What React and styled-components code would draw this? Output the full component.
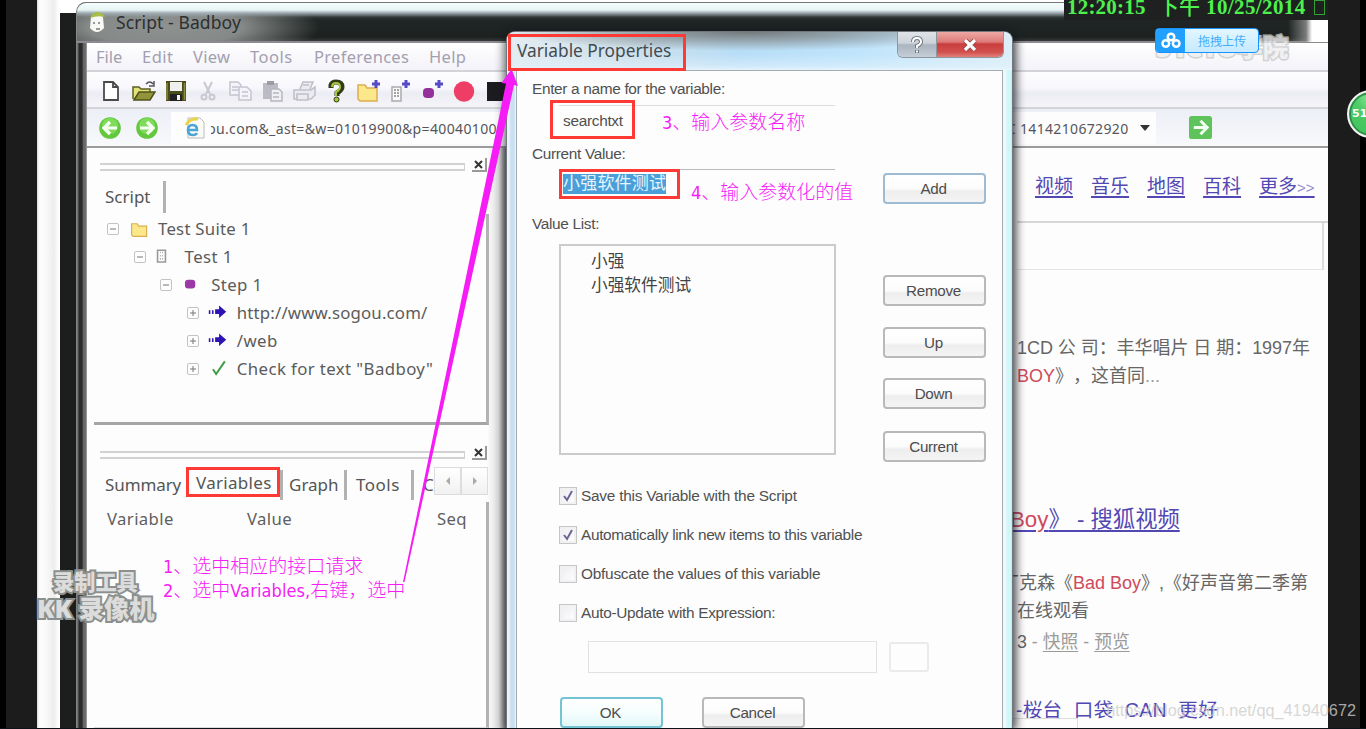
import styled, { createGlobalStyle } from 'styled-components';

const GlobalStyle = createGlobalStyle`
  * {
    box-sizing: border-box;
  }
  body {
    margin: 0;
    overflow: hidden;
    background: #000;
  }
`;

const segoe = '"Noto Sans", "Noto Sans CJK SC", sans-serif';
const arial = '"Liberation Sans", "Noto Sans CJK SC", sans-serif';

const Desktop = styled.div`
  position: relative;
  display: flex;
  width: 1366px;
  height: 729px;
  overflow: hidden;
  background: #000;
  border-bottom: 1px solid #0c1218;
  font-family: ${segoe};
  white-space: nowrap;
`;

const Bezel = styled.div`
  width: ${({ $width }) => $width}px;
  margin-left: ${({ $gap = 0 }) => $gap}px;
  background: #1c1c1c;
`;

const Wallpaper = styled.div`
  width: 1291px;
  padding: 13px 0 0 23px;
  background: linear-gradient(90deg, #d8d8d8 0, #fdfdfd 2px, #fafafa 8px, #ededee 17px, #fff 22px);
`;

const WallpaperDark = styled.div`
  height: 100%;
  background: #1c1d1d;
`;

/* main window */

const Window = styled.section`
  position: absolute;
  left: 76px;
  top: 2px;
  width: 1252px;
  height: 726px;
  display: flex;
  flex-direction: column;
  padding-left: 11px;
  overflow: hidden;
  border-radius: 10px 0 0 0;
  background: linear-gradient(90deg, #8a8a8a 0, #686868 2px, #2a2a2a 3px, #2c2c2c 6px, #777 8px, #5a5a5a 9px, #a8a8a8 11px);
`;

const TitleBar = styled.header`
  display: flex;
  align-items: center;
  height: 41px;
  margin-left: -11px;
  padding: 0 0 0 10px;
  border-top: 1px solid #777;
  border-left: 1px solid #888;
  border-bottom: 2px solid #8c8c90;
  border-radius: 10px 0 0 0;
  background:
    linear-gradient(180deg, #f4fffd 0, #e7f4f4 7px, rgba(165, 178, 186, 0.9) 10px, rgba(56, 64, 63, 0) 14px),
    radial-gradient(ellipse 155px 36px at 88px 24px, #8d9190 0, #858988 50%, rgba(60, 64, 64, 0) 100%),
    linear-gradient(180deg, #38403f 13px, #202625 17px, #1d2221 34px, #414545 40px);
  font-size: 17.5px;
  line-height: 24px;
  color: #2c3030;
`;

const TitleText = styled.span`
  margin-left: 9px;
  letter-spacing: 0.1px;
`;

const CaptionGlow = styled.div`
  position: absolute;
  top: 18px;
  right: 0;
  width: 40px;
  height: 22px;
  background: linear-gradient(90deg, rgba(255, 255, 255, 0) 0, rgba(160, 160, 160, 0.7) 18px, #fff 24px);
`;

const MenuBar = styled.nav`
  display: flex;
  height: 29px;
  padding: 0 0 0 9px;
  border-bottom: 2px solid #d4d4d8;
  background: linear-gradient(180deg, #fff, #f3f3f9);
  font-size: 16.5px;
  line-height: 28px;
  color: #a29fb0;
`;

const MenuItem = styled.span`
  width: ${({ $width }) => $width}px;
  letter-spacing: ${({ $spacing = 0 }) => $spacing}px;
`;

const ToolBar = styled.div`
  display: flex;
  align-items: center;
  height: 37px;
  padding: 2px 0 0 9px;
  border-bottom: 2px solid #d3d3d9;
  background: linear-gradient(180deg, #fdfdfe 0, #f8f7fc 45%, #ecedf4 60%, #f4f4f8 100%);
`;

const ToolSlot = styled.span`
  display: flex;
  justify-content: center;
  width: 32px;
  height: 24px;
`;

const AddressBar = styled.div`
  display: flex;
  align-items: center;
  height: 39px;
  padding-left: 11px;
  border-bottom: 2px solid #9b9b9b;
  background: linear-gradient(180deg, #eceff6, #f8f9fb);
`;

const NavRound = styled.span`
  display: flex;
  width: 24px;
  height: 24px;
  margin-right: 13px;
`;

const AddressField = styled.div`
  display: flex;
  align-items: center;
  width: 985px;
  height: 32px;
  margin-left: -1px;
  padding-left: 13px;
  background: #fdfdfe;
  font-size: 14px;
  color: #55555a;
`;

const AddressText = styled.span`
  width: ${({ $width }) => $width}px;
  margin: 2px 0 0 ${({ $left = 0 }) => $left}px;
  overflow: hidden;
  line-height: 24px;
  letter-spacing: ${({ $spacing = 0 }) => $spacing}px;
`;

const Clipped = styled.span`
  display: inline-block;
  width: 5px;
  overflow: hidden;
  vertical-align: top;
  direction: rtl;
`;

const Caret = styled.i`
  margin-left: 11px;
  border: 5px solid transparent;
  border-top: 6px solid #333;
  border-bottom: 0;
`;

const GoButton = styled.span`
  display: flex;
  margin-left: 33px;
  width: 23px;
  height: 23px;
`;

const Body = styled.div`
  display: flex;
  flex: 1;
  min-height: 0;
`;

const Docks = styled.aside`
  width: 423px;
  padding: 10px 21px 0 7px;
  background: linear-gradient(90deg, #fdfdfd 400px, #dedede 412px, #777 420px);
`;

const Dock = styled.div`
  height: ${({ $height }) => $height}px;
`;

const DockHandle = styled.div`
  display: flex;
  align-items: center;
  justify-content: space-between;
  height: 14px;
  padding: 0 2px 0 6px;
`;

const Grip = styled.span`
  width: 365px;
  height: 8px;
  margin-top: 3px;
  border: solid #d2d2d2;
  border-width: 2px 1px 2px 0;
`;

const CloseBox = styled.span`
  display: flex;
  align-items: center;
  justify-content: center;
  width: 15px;
  height: 14px;
  border-right: 2px solid #999;
  border-bottom: 2px solid #999;
`;

const TabRow = styled.div`
  display: flex;
  align-items: center;
  height: 42px;
  padding-left: 11px;
  color: #555;
  font-size: 17px;
`;

const Tab = styled.span`
  width: ${({ $width }) => $width}px;
  height: ${({ $height = 30 }) => $height}px;
  margin-top: 7px;
  padding-left: ${({ $pad = 0 }) => $pad}px;
  line-height: ${({ $active, $height = 30 }) => ($active ? 26 : $height - 1)}px;
  border-right: ${({ $divider }) => ($divider ? '3px solid #b2b2b2' : '0')};
  overflow: hidden;
  letter-spacing: ${({ $spacing = 0 }) => $spacing}px;
`;

const ScrollButton = styled.span`
  display: flex;
  align-items: center;
  justify-content: center;
  width: 27px;
  height: 28px;
  border: 1px solid #ddd;
  background: linear-gradient(180deg, #fff, #f1f1f1);
`;

const Panel = styled.div`
  height: ${({ $height }) => $height}px;
  border-right: 3px solid #b2b2b2;
  border-bottom: ${({ $open }) => ($open ? '1px solid #ddd' : '3px solid #a5a5a5')};
`;

const TreeRow = styled.div`
  display: flex;
  align-items: center;
  height: 28px;
  padding-left: ${({ $depth }) => 13 + $depth * 26.6}px;
  color: #5b5b5b;
  font-size: 16.8px;
`;

const Expander = styled.span`
  display: flex;
  align-items: center;
  justify-content: center;
  width: 12px;
  height: 12px;
  margin-top: 2px;
  border: 1px solid #c3c3c3;
  border-radius: 2px;
`;

const TreeIcon = styled.span`
  display: flex;
  justify-content: center;
  width: 28px;
  margin: 1px 0 0 ${({ $left }) => $left}px;
`;

const TreeLabel = styled.span`
  margin-left: ${({ $left }) => $left}px;
  letter-spacing: ${({ $spacing = 0 }) => $spacing}px;
`;

const TableHead = styled.div`
  display: flex;
  padding: 3px 0 0 13px;
  font-size: 16.7px;
  line-height: 28px;
  letter-spacing: 0.4px;
  color: #5f5f5f;
`;

const Column = styled.span`
  width: ${({ $width }) => $width}px;
`;

/* page on the right */

const WebPage = styled.main`
  position: relative;
  flex: 1;
  margin-left: 490px;
  padding: 26px 0 0 17px;
  overflow: hidden;
  background: #fdfdfd;
  font-family: ${arial};
`;

const Categories = styled.div`
  display: flex;
  gap: 18px;
  padding-left: 18px;
  font-size: 19px;
  line-height: 26px;
`;

const PageLink = styled.a`
  color: #5148b4;
  text-decoration: underline;
  text-underline-offset: 3px;
  text-decoration-thickness: 2px;
`;

const Chevrons = styled.span`
  font-size: 15px;
  color: #918cc8;
`;

const SearchBox = styled.div`
  height: 49px;
  margin: 20px 0 0 0;
  border-top: 2px solid #d6d6d6;
  padding-right: 4px;
`;

const SearchInner = styled.div`
  height: 47px;
  border-right: 2px solid #ddd;
  border-bottom: 1px solid #e4e4e4;
`;

const Line = styled.p`
  height: 28px;
  margin: ${({ $top = 0 }) => $top}px 0 0 ${({ $left = 0 }) => $left}px;
  font-size: ${({ $size = 18 }) => $size}px;
  line-height: 28px;
  letter-spacing: ${({ $spacing = 0 }) => $spacing}px;
  text-spacing-trim: space-all;
  color: #666;
`;

const Mark = styled.em`
  font-style: normal;
  color: #cf4a5c;
`;

const Soft = styled.span`
  color: #9b9b9b;
  text-decoration: ${({ $link }) => ($link ? 'underline' : 'none')};
  text-underline-offset: 3px;
`;

const LastLine = styled.div`
  margin: 42px 0 0 -1px;
  font-size: 19.5px;
  line-height: 24px;
  letter-spacing: 0.3px;
  color: #5148b4;
`;

const StatusTip = styled.div`
  position: absolute;
  left: 0;
  bottom: 0;
  width: 78px;
  height: 10px;
  border: solid #ddd;
  border-width: 1px 1px 0 0;
  background: #fdfdfd;
`;

/* dialog */

const Dialog = styled.section`
  position: absolute;
  left: 506px;
  top: 31px;
  width: 507px;
  height: 697px;
  display: flex;
  flex-direction: column;
  padding: 0 9px;
  border: 1px solid #6f787d;
  border-bottom: 0;
  border-radius: 9px 9px 0 0;
  background: linear-gradient(90deg, #eef4f8 0, #e9f2fa 2px, #cbdff2 4px, #cbdff2 7px, #eef6fa 9px, #eef6fa 496px, #eefafa 498px, #cdf7f8 501px, #d5f6f7 504px, #8aa0a4 507px);
  box-shadow: 4px 2px 9px rgba(20, 20, 30, 0.65), -3px 2px 8px rgba(20, 20, 30, 0.5);
  clip-path: inset(-20px -30px 0 -30px);
  font-family: ${arial};
  font-size: 15.4px;
  color: #505050;
`;

const DialogTitle = styled.header`
  display: flex;
  justify-content: space-between;
  height: 40px;
  margin: 0 -9px;
  padding: 0 8px 0 10px;
  border-radius: 8px 8px 0 0;
  background:
    linear-gradient(180deg, rgba(255, 255, 255, 0) 22px, rgba(226, 242, 252, 0.55) 34px, #eef7fb 40px),
    radial-gradient(ellipse 240px 19px at 240px 0, #747a7c 0, rgba(135, 145, 150, 0.8) 40%, rgba(190, 215, 230, 0) 100%),
    linear-gradient(90deg, #e3edf2 0, #cfe0ea 120px, #b8def7 230px, #bfe4fb 350px, #dceef8 100%);
  font-family: ${segoe};
  font-size: 17.3px;
  line-height: 38px;
  color: #444b51;
`;

const CaptionButtons = styled.div`
  display: flex;
  height: 26px;
  overflow: hidden;
  border: 1px solid #8e969e;
  border-top: 0;
  border-radius: 0 0 6px 6px;
`;

const CaptionButton = styled.span`
  display: flex;
  align-items: center;
  justify-content: center;
  width: ${({ $close }) => ($close ? 66 : 39)}px;
  border-right: ${({ $close }) => ($close ? '0' : '1px solid #8e969e')};
  background: ${({ $close }) =>
    $close
      ? 'linear-gradient(180deg, #eda9a6 0, #dd7b78 10px, #c93e3d 12px, #d1504e 20px, #e58a84 26px)'
      : 'linear-gradient(180deg, #dfe3e8 0, #cdd3da 11px, #abb4bf 13px, #c6d0d9 26px)'};
`;

const DialogBody = styled.div`
  display: flex;
  flex-direction: column;
  flex: 1;
  border: 1px solid #a5adb2;
  border-bottom: 0;
  background: #fdfdfd;
`;

const Upper = styled.div`
  display: flex;
  height: 405px;
  padding: 8px 0 0 15px;
`;

const Form = styled.div`
  width: 351px;
`;

const Label = styled.div`
  height: ${({ $height }) => $height}px;
  line-height: 19px;
  letter-spacing: -0.33px;
`;

const Input = styled.div`
  width: 276px;
  height: ${({ $height }) => $height}px;
  margin-left: 27px;
  padding: ${({ $pad }) => $pad};
  border-top: 1px solid ${({ $edge }) => $edge};
  line-height: 19px;
  letter-spacing: -0.3px;
`;

const Selected = styled.span`
  display: inline-block;
  height: 20px;
  background: #4a9fd8;
  color: #e5f5ff;
  font-size: 17px;
  line-height: 19px;
  letter-spacing: 0.2px;
`;

const ListBox = styled.div`
  width: 277px;
  height: 211px;
  margin-left: 27px;
  padding: 4px 0 0 30px;
  border: 2px solid #cbcbcb;
  font-size: 16.7px;
  line-height: 24px;
  color: #444;
`;

const Actions = styled.div`
  display: flex;
  flex-direction: column;
  padding-top: 94px;
`;

const PushButton = styled.button`
  width: 103px;
  height: 31px;
  margin: ${({ $margin = '0' }) => $margin};
  padding: 0 2px 0 0;
  border: 2px solid ${({ $tone }) => ({ hot: '#9dbbd2', ok: '#74c4d3' })[$tone] || '#b9b9b9'};
  border-radius: 4px;
  background: ${({ $tone }) =>
    $tone === 'ok'
      ? 'linear-gradient(180deg, #fff 0, #f6fefe 50%, #e1f6f7 100%)'
      : 'linear-gradient(180deg, #fff 0, #fcfcfc 50%, #eeeeef 60%, #f4f4f4 100%)'};
  font-family: ${arial};
  font-size: 15.2px;
  line-height: 27px;
  letter-spacing: -0.3px;
  color: #4c4c4c;
`;

const CheckRow = styled.label`
  display: flex;
  align-items: center;
  height: 39px;
  padding-left: 42px;
  letter-spacing: ${({ $spacing }) => $spacing}px;
`;

const CheckBox = styled.span`
  display: flex;
  align-items: center;
  justify-content: center;
  width: 18px;
  height: 18px;
  margin-right: 4px;
  border: 1px solid #c6c6c6;
  box-shadow: inset 0 0 0 2px #f1f1f3;
  background: linear-gradient(135deg, #ececf0, #fff);
`;

const ExpressionRow = styled.div`
  display: flex;
  align-items: center;
  gap: 12px;
  height: 32px;
  margin: 9px 0 24px 71px;
`;

const ExpressionField = styled.div`
  width: 289px;
  height: 32px;
  border: 1px solid #e2e2e2;
`;

const BrowseButton = styled.div`
  width: 40px;
  height: 30px;
  border: 2px solid #ebebeb;
  border-radius: 3px;
`;

const Footer = styled.div`
  display: flex;
  gap: 39px;
  padding-left: 43px;
`;

/* notes, marks and floating badges over the windows */

const Frame = styled.div`
  position: absolute;
  left: ${({ $x }) => $x}px;
  top: ${({ $y }) => $y}px;
  width: ${({ $w }) => $w}px;
  height: ${({ $h }) => $h}px;
  border: 3px solid #ff3a35;
`;

const Note = styled.div`
  position: absolute;
  left: ${({ $x }) => $x}px;
  top: ${({ $y }) => $y}px;
  font-family: "Noto Sans CJK SC", sans-serif;
  font-size: 19px;
  font-weight: 300;
  line-height: 24px;
  color: #f51cf5;
`;

const NoteLatin = styled.span`
  font-family: "DejaVu Sans Condensed", "DejaVu Sans", sans-serif;
  font-size: 18px;
  font-weight: 400;
  font-stretch: condensed;
  letter-spacing: ${({ $spacing = 0 }) => $spacing}px;
`;

const ArrowLayer = styled.svg`
  position: absolute;
  left: 0;
  top: 0;
`;

const Clock = styled.div`
  position: absolute;
  left: 1064px;
  top: 0;
  width: 264px;
  height: 20px;
  display: flex;
  padding-left: 3px;
  background: #1e2120;
  font-family: "Liberation Serif", "Noto Sans CJK SC", serif;
  font-size: 21px;
  font-weight: 700;
  line-height: 15px;
  color: #4df04d;
`;

const ClockPart = styled.span`
  width: ${({ $width }) => $width}px;
  font-weight: ${({ $weight = 700 }) => $weight};
  letter-spacing: ${({ $spacing = 0 }) => $spacing}px;
`;

const ClockBox = styled.i`
  width: 11px;
  height: 15px;
  border: 1px solid #35a035;
`;

const Recorder = styled.div`
  position: absolute;
  left: 37px;
  top: 568px;
  font-weight: 900;
  line-height: 27px;
  color: #dcdcdc;
  -webkit-text-stroke: 4px #8b908e;
  paint-order: stroke fill;
`;

const RecorderLine = styled.div`
  padding-left: ${({ $left = 0 }) => $left}px;
  font-size: ${({ $size }) => $size}px;
`;

const School = styled.div`
  position: absolute;
  left: 1156px;
  top: 31px;
  font-size: 25.5px;
  font-weight: 900;
  line-height: 32px;
  color: #efefef;
  -webkit-text-stroke: 3px #c9c9c9;
  paint-order: stroke fill;
  opacity: 0.8;
`;

const Uploader = styled.div`
  position: absolute;
  left: 1155px;
  top: 28px;
  width: 104px;
  height: 25px;
  display: flex;
  overflow: hidden;
  border: 1px solid #1794fb;
  border-radius: 4px;
  background: linear-gradient(180deg, #e3f6ff, #c5eaff);
  font-family: "Noto Sans CJK SC", sans-serif;
  font-size: 12px;
  line-height: 23px;
  color: #45aef8;
`;

const UploaderLogo = styled.span`
  display: flex;
  align-items: center;
  justify-content: center;
  width: 29px;
  margin-right: 13px;
  background: #21a0ff;
`;

const Ball = styled.div`
  position: absolute;
  left: 1347px;
  top: 90px;
  width: 48px;
  height: 48px;
  padding-left: 3px;
  border: 2px solid #f3f3f3;
  border-radius: 50%;
  background: radial-gradient(circle at 50% 12%, #8ee49a 0, #4ecb66 35%, #3fc25a 100%);
  box-shadow: inset 0 0 0 2px #2f8f48;
  font-family: "DejaVu Sans", sans-serif;
  font-size: 11px;
  font-weight: 700;
  line-height: 43px;
  color: #fff;
`;

const PageMark = styled.div`
  position: absolute;
  right: 10px;
  top: 699px;
  font-family: ${arial};
  font-size: 16.3px;
  line-height: 22px;
  color: rgba(205, 205, 205, 0.8);
`;

const Svg = ({ children, size = 24 }) => (
  <svg width={size} height={size} viewBox="0 0 24 24" fill="none">
    {children}
  </svg>
);

const FolderShape = () => (
  <path d="M2 6h7l2 3h10v13H4l-2-2z" fill="#fbe88a" stroke="#dcae4e" strokeWidth="1.5" />
);

const Plus = () => <path d="M20 1v8M16 5h8" stroke="#554cc4" strokeWidth="3" />;

const tools = [
  <path d="M4 3h9l5 5v13H4zM13 3v5h5" fill="#fff" stroke="#4a4a4a" strokeWidth="1.8" />,
  <>
    <path d="M1 20V8h6l2 2h9v3" fill="#e2e27a" stroke="#5e5f22" strokeWidth="1.5" />
    <path d="M2 21l5-8h16l-5 8z" fill="#92943a" stroke="#4f511a" strokeWidth="1.5" />
    <path d="M14 5q4-4 7 0M22 2v5h-5" stroke="#555" strokeWidth="1.5" />
  </>,
  <>
    <path d="M2 2h20v20H2z" fill="#4a4c1e" />
    <path d="M6 3h12v9H6z" fill="#eef0ee" />
    <path d="M6 15h12v7H6z" fill="#222" />
    <path d="M13 16h3v5h-3z" fill="#f5f5f5" />
    <path d="M3 4v17M20.500 4v17" stroke="#8a8d3c" strokeWidth="1.500" />
  </>,
  <g stroke="#c8c8d2" strokeWidth="2">
    <path d="M8 3l6 12M16 3l-6 12" />
    <circle cx="8" cy="18" r="2.500" />
    <circle cx="16" cy="18" r="2.500" />
  </g>,
  <g fill="#f3f3f8" stroke="#c5c5d0" strokeWidth="1.500">
    <path d="M2 3h8l3 3v10H2zM4 8h6M4 11h6" />
    <path d="M11 8h8l4 4v9H11zM14 13h6M14 17h6" />
  </g>,
  <>
    <path d="M3 4h15v16H3z" fill="#bbbbc4" />
    <path d="M7 2h7v4H7z" fill="#9c9ca6" />
    <path d="M11 10h8l3 3v9H11zM13 14h6M13 18h6" fill="#efeff4" stroke="#b7b7c0" strokeWidth="1.500" />
  </>,
  <g fill="#ebebf0" stroke="#c0c0ca" strokeWidth="1.600">
    <path d="M8 10l3-7h10l-3 7" />
    <path d="M2 11h17l4-3v8l-4 4H2z" />
    <path d="M5 15h11v6H5zM11 6h6" />
  </g>,
  <>
    <path d="M7 9V6q1-3 5-3 6 0 6 5 0 3-5 6v3" stroke="#333b16" strokeWidth="5" />
    <path d="M8 8q0-4 4-4t4 4q0 3-4 5v4" stroke="#a4c83c" strokeWidth="2" />
    <circle cx="12.500" cy="20.500" r="2.500" fill="#a4c83c" stroke="#333b16" />
  </>,
  <>
    <FolderShape />
    <Plus />
  </>,
  <>
    <path d="M4 8h9v14H4z" fill="#fafafa" stroke="#aaa" strokeWidth="1.500" />
    <path d="M6 11h2m1 0h2M6 14h2m1 0h2M6 17h2m1 0h2" stroke="#888" strokeWidth="1.500" />
    <g transform="translate(-2 0)"><Plus /></g>
  </>,
  <>
    <rect x="3" y="9" width="11" height="10" rx="4" fill="#93309b" />
    <g transform="translate(-1 0)"><Plus /></g>
  </>,
  <circle cx="12" cy="12.500" r="10.200" fill="#ee3e66" />,
  <path d="M3 3h21v19H3z" fill="#1b1b20" />,
];

const RoundArrow = ({ back }) => (
  <Svg>
    <circle cx="12" cy="12" r="10.800" fill="#63c83f" />
    <circle cx="12" cy="10" r="8" fill="#7edc58" />
    <path
      d={back ? 'M19 12H7M12 6l-6 6 6 6' : 'M5 12h12M12 6l6 6-6 6'}
      stroke="#f8fff4"
      strokeWidth="3.200"
    />
  </Svg>
);

const tree = [
  { text: 'Test Suite 1', depth: 0, icon: 'folder', iconLeft: 6, left: 5, spacing: 0.25 },
  { text: 'Test 1', depth: 1, icon: 'test', iconLeft: 2, left: 9, spacing: 0.4 },
  { text: 'Step 1', depth: 2, icon: 'step', iconLeft: 4, left: 7, spacing: 0.4 },
  { text: 'http://www.sogou.com/', depth: 3, icon: 'request', iconLeft: 5, left: 5, plus: true, spacing: 0.18 },
  { text: '/web', depth: 3, icon: 'request', iconLeft: 5, left: 5, plus: true, spacing: 0.4 },
  { text: 'Check for text "Badboy"', depth: 3, icon: 'check', iconLeft: 6, left: 4, plus: true, spacing: 0.4 },
];

const treeIcons = {
  folder: <FolderShape />,
  test: (
    <path d="M7 4h10v15H7zM10 7h1m2 0h1m-4 4h1m2 0h1m-4 4h1m2 0h1" stroke="#999" strokeWidth="2" />
  ),
  step: <rect x="5" y="6" width="13" height="11" rx="4" fill="#9b3aa5" />,
  request: <path d="M1 9h2v5H1zM5 9h2v5H5zM9 8h5V3l9 8-9 8v-5H9z" fill="#2c13b4" />,
  check: <path d="M5 13l4 6L20 3" stroke="#3d9c46" strokeWidth="2.500" />,
};

const checks = [
  { text: 'Save this Variable with the Script', on: true, spacing: -0.24 },
  { text: 'Automatically link new items to this variable', on: true, spacing: -0.33 },
  { text: 'Obfuscate the values of this variable', on: false, spacing: -0.24 },
  { text: 'Auto-Update with Expression:', on: false, spacing: -0.3 },
];

const CloseMark = () => (
  <svg width="9" height="9" viewBox="0 0 9 9">
    <path d="M1 1l7 7M8 1L1 8" stroke="#333" strokeWidth="2" />
  </svg>
);

const Handle = () => (
  <DockHandle>
    <Grip />
    <CloseBox>
      <CloseMark />
    </CloseBox>
  </DockHandle>
);

const MainWindow = () => (
  <Window>
    <TitleBar>
      <svg width="20" height="24" viewBox="0 0 20 24">
        <path d="M4 7q6-4 12 0l1 11q-7 8-14 0z" fill="#f8f8f5" />
        <path d="M3 8q3-7 8-6t7 5q-7-2-15 1" fill="#a8bd47" />
        <path d="M7 12v2m5-2v2m-3 5h4" stroke="#777" strokeWidth="1.500" />
      </svg>
      <TitleText>Script - Badboy</TitleText>
    </TitleBar>
    <CaptionGlow />
    <MenuBar>
      <MenuItem $width={46}>File</MenuItem>
      <MenuItem $width={51} $spacing={0.5}>Edit</MenuItem>
      <MenuItem $width={57} $spacing={0.3}>View</MenuItem>
      <MenuItem $width={64} $spacing={0.5}>Tools</MenuItem>
      <MenuItem $width={115} $spacing={0.3}>Preferences</MenuItem>
      <MenuItem $width={50} $spacing={0.3}>Help</MenuItem>
    </MenuBar>
    <ToolBar>
      {tools.map((tool, i) => (
        <ToolSlot key={i}>
          <Svg>{tool}</Svg>
        </ToolSlot>
      ))}
    </ToolBar>
    <AddressBar>
      <NavRound><RoundArrow back /></NavRound>
      <NavRound><RoundArrow /></NavRound>
      <AddressField>
        <svg width="22" height="24" viewBox="0 0 22 24">
          <path d="M4 2h12l4 4v16H4z" fill="#fbfbf6" stroke="#bbb" />
          <path d="M2 9q4-7 12-6" stroke="#e8d54a" strokeWidth="3" fill="none" />
          <path d="M4 14h9q0-5-4.500-5T4 14t5 5q3 0 4-2" stroke="#4aa5d8" strokeWidth="2.600" fill="none" />
        </svg>
        <AddressText $width={300} $left={5} $spacing={0.36}>
          <Clipped>o</Clipped>u.com&_ast=&w=01019900&p=40040100
        </AddressText>
        <AddressText $width={118} $left={500} $spacing={0.34}>
          <Clipped>C</Clipped>&nbsp;1414210672920
        </AddressText>
        <Caret />
      </AddressField>
      <GoButton>
        <Svg size={23}>
          <rect width="24" height="24" rx="3" fill="#5fc35c" />
          <path d="M5 12h12M12 5l7 7-7 7" stroke="#f3fff2" strokeWidth="3" />
        </Svg>
      </GoButton>
    </AddressBar>
    <Body>
      <Docks>
        <Dock $height={288}>
          <Handle />
          <TabRow>
            <Tab $width={61} $height={32} $divider>Script</Tab>
          </TabRow>
          <Panel $height={211}>
            {tree.map((row) => (
              <TreeRow key={row.text} $depth={row.depth}>
                <Expander>
                  <svg width="8" height="8">
                    <path d={row.plus ? 'M1 4h6M4 1v6' : 'M1 4h6'} stroke="#777" />
                  </svg>
                </Expander>
                <TreeIcon $left={row.iconLeft}>
                  <Svg size={19}>{treeIcons[row.icon]}</Svg>
                </TreeIcon>
                <TreeLabel $left={row.left} $spacing={row.spacing}>{row.text}</TreeLabel>
              </TreeRow>
            ))}
          </Panel>
        </Dock>
        <Dock $height={283}>
          <Handle />
          <TabRow>
            <Tab $width={82} $spacing={-0.1}>Summary</Tab>
            <Tab $width={96} $pad={9} $spacing={0.3} $active $divider>Variables</Tab>
            <Tab $width={64} $pad={6} $divider>Graph</Tab>
            <Tab $width={67} $pad={9} $spacing={0.5} $divider>Tools</Tab>
            <Tab $width={20} $pad={9}>C</Tab>
            <ScrollButton>
              <svg width="6" height="8"><path d="M5 0v8L1 4z" fill="#aaa" /></svg>
            </ScrollButton>
            <ScrollButton>
              <svg width="6" height="8"><path d="M1 0v8l4-4z" fill="#aaa" /></svg>
            </ScrollButton>
          </TabRow>
          <Panel $height={226} $open>
            <TableHead>
              <Column $width={140}>Variable</Column>
              <Column $width={190}>Value</Column>
              <Column $width={45}>Seq</Column>
            </TableHead>
          </Panel>
        </Dock>
      </Docks>
      <WebPage>
        <Categories>
          {['视频', '音乐', '地图', '百科'].map((name) => (
            <PageLink key={name}>{name}</PageLink>
          ))}
          <PageLink>更多<Chevrons>&gt;&gt;</Chevrons></PageLink>
        </Categories>
        <SearchBox>
          <SearchInner />
        </SearchBox>
        <Line $top={64} $spacing={-0.05}>1CD 公 司：丰华唱片 日 期：1997年</Line>
        <Line><Mark>BOY</Mark>》，这首同<Soft>...</Soft></Line>
        <Line $top={116} $left={-7} $size={22.3}>
          <PageLink><Mark>Boy</Mark>》 - 搜狐视频</PageLink>
        </Line>
        <Line $top={35} $left={-16}>丁克森《<Mark>Bad Boy</Mark>》,《好声音第二季第</Line>
        <Line>在线观看</Line>
        <Line $top={3} $size={17.8}>
          3 <Soft>-</Soft> <Soft $link>快照</Soft> <Soft>-</Soft> <Soft $link>预览</Soft>
        </Line>
        <LastLine>-桜台&nbsp; 口袋&nbsp; CAN&nbsp; 更好</LastLine>
        <StatusTip />
      </WebPage>
    </Body>
  </Window>
);

const VariableDialog = () => (
  <Dialog>
    <DialogTitle>
      Variable Properties
      <CaptionButtons>
        <CaptionButton>
          <svg width="14" height="18" viewBox="0 0 14 18" fill="none">
            <path d="M3 6q0-4 4-4t4 4q0 2-4 4v2M7 14v3" stroke="#70767e" strokeWidth="4" />
            <path d="M3 6q0-4 4-4t4 4q0 2-4 4v2M7 14.500v2" stroke="#fff" strokeWidth="2" />
          </svg>
        </CaptionButton>
        <CaptionButton $close>
          <svg width="14" height="12" viewBox="0 0 14 12">
            <path d="M2 1l10 10M12 1L2 11" stroke="#8d5050" strokeWidth="5" />
            <path d="M2 1l10 10M12 1L2 11" stroke="#fff" strokeWidth="3.200" />
          </svg>
        </CaptionButton>
      </CaptionButtons>
    </DialogTitle>
    <DialogBody>
      <Upper>
        <Form>
          <Label $height={26}>Enter a name for the variable:</Label>
          <Input $height={39} $pad="5px 0 0 4px" $edge="#ddd">searchtxt</Input>
          <Label $height={25}>Current Value:</Label>
          <Input $height={45} $pad="4px 0 0 4px" $edge="#bbb">
            <Selected>小强软件测试</Selected>
          </Input>
          <Label $height={30}>Value List:</Label>
          <ListBox>
            小强
            <br />
            小强软件测试
          </ListBox>
        </Form>
        <Actions>
          <PushButton $tone="hot" $margin="0 0 71px">Add</PushButton>
          <PushButton $margin="0 0 21px">Remove</PushButton>
          <PushButton $margin="0 0 20px">Up</PushButton>
          <PushButton $margin="0 0 22px">Down</PushButton>
          <PushButton>Current</PushButton>
        </Actions>
      </Upper>
      <div>
        {checks.map((check) => (
          <CheckRow key={check.text} $spacing={check.spacing}>
            <CheckBox>
              {check.on && (
                <svg width="12" height="12" fill="none">
                  <path d="M2 6l3 4 5-9" stroke="#6a6796" strokeWidth="2" />
                </svg>
              )}
            </CheckBox>
            {check.text}
          </CheckRow>
        ))}
      </div>
      <ExpressionRow>
        <ExpressionField />
        <BrowseButton />
      </ExpressionRow>
      <Footer>
        <PushButton $tone="ok">OK</PushButton>
        <PushButton>Cancel</PushButton>
      </Footer>
    </DialogBody>
  </Dialog>
);

export default function App() {
  return (
    <>
      <GlobalStyle />
      <Desktop>
        <Bezel $width={31} $gap={6} />
        <Wallpaper>
          <WallpaperDark />
        </Wallpaper>
        <Bezel $width={32} />
        <MainWindow />
        <VariableDialog />
        <Clock>
          <ClockPart $width={91} $spacing={0.2}>12:20:15</ClockPart>
          <ClockPart $width={48} $weight={500}>下午</ClockPart>
          <ClockPart $width={108} $spacing={0.4}>10/25/2014</ClockPart>
          <ClockBox />
        </Clock>
        <School>51CTO学院</School>
        <Recorder>
          <RecorderLine $left={16} $size={21.2}>录制工具</RecorderLine>
          <RecorderLine $size={25.4}>KK 录像机</RecorderLine>
        </Recorder>
        <Frame $x={508} $y={34} $w={178} $h={37} />
        <Frame $x={550} $y={100} $w={85} $h={39} />
        <Frame $x={559} $y={169} $w={121} $h={30} />
        <Frame $x={186} $y={467} $w={94} $h={30} />
        <Note $x={662} $y={109}><NoteLatin>3</NoteLatin>、输入参数名称</Note>
        <Note $x={691} $y={179}><NoteLatin>4</NoteLatin>、输入参数化的值</Note>
        <Note $x={163} $y={553}><NoteLatin>1</NoteLatin>、选中相应的接口请求</Note>
        <Note $x={163} $y={577}>
          <NoteLatin>2</NoteLatin>、选中<NoteLatin $spacing={0.1}>Variables,</NoteLatin>右键，选中
        </Note>
        <ArrowLayer width="560" height="600">
          <path d="M403 582L506 83.500l-4.500-.5L511.500 69 518 86l-4-1L404.500 582z" fill="#f51cf5" />
        </ArrowLayer>
        <Uploader>
          <UploaderLogo>
            <svg width="20" height="17" fill="none" stroke="#fff" strokeWidth="2.500">
              <circle cx="10" cy="5" r="3.300" />
              <circle cx="4.800" cy="11.500" r="3.300" />
              <circle cx="15.200" cy="11.500" r="3.300" />
            </svg>
          </UploaderLogo>
          拖拽上传
        </Uploader>
        <Ball>51</Ball>
        <PageMark>https://blog.csdn.net/qq_41940672</PageMark>
      </Desktop>
    </>
  );
}
